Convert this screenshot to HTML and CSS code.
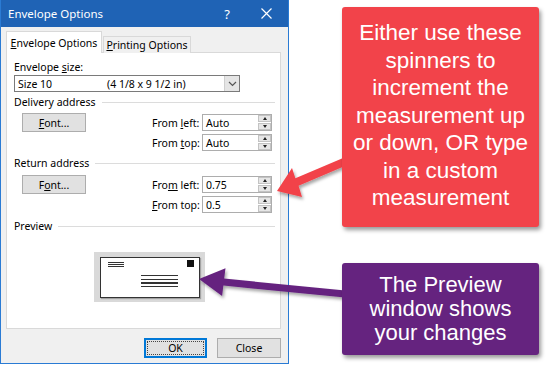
FILE: index.html
```html
<!DOCTYPE html>
<html>
<head>
<meta charset="utf-8">
<link rel="stylesheet" href="styles.css">
</head>
<body>
<div class="stage">
  <div class="dialog">
    <div class="titlebar">
      <span class="title">Envelope Options</span>
      <span class="help">?</span>
      <svg class="close" width="11" height="11" viewBox="0 0 11 11"><path d="M0.5 0.5L10.5 10.5M10.5 0.5L0.5 10.5" stroke="#fff" stroke-width="1.2"/></svg>
    </div>
    <div class="dlg-body">
      <div class="tabs">
        <div class="tab active"><u>E</u>nvelope Options</div>
        <div class="tab"><u>P</u>rinting Options</div>
      </div>
      <div class="panel">
        <div class="label">Envelope <u>s</u>ize:</div>
        <div class="select">
          <span class="sel-name">Size 10</span>
          <span class="sel-dim">(4 1/8 x 9 1/2 in)</span>
          <span class="sel-btn"><svg width="9" height="6" viewBox="0 0 9 6"><path d="M1 1L4.5 4.5L8 1" fill="none" stroke="#555" stroke-width="1.2"/></svg></span>
        </div>
        <div class="group g-delivery"><span>Delivery address</span><span class="rule"></span></div>
        <div class="addr a-delivery">
          <div class="btn font-btn"><u>F</u>ont...</div>
          <div class="fields">
            <div class="field"><span class="flabel">From <u>l</u>eft:</span><div class="spin"><span class="val">Auto</span><div class="spinbtns"><span class="up"></span><span class="down"></span></div></div></div>
            <div class="field"><span class="flabel">From <u>t</u>op:</span><div class="spin"><span class="val">Auto</span><div class="spinbtns"><span class="up"></span><span class="down"></span></div></div></div>
          </div>
        </div>
        <div class="group g-return"><span>Return address</span><span class="rule"></span></div>
        <div class="addr a-return">
          <div class="btn font-btn">F<u>o</u>nt...</div>
          <div class="fields">
            <div class="field"><span class="flabel">Fro<u>m</u> left:</span><div class="spin"><span class="val">0.75</span><div class="spinbtns"><span class="up"></span><span class="down"></span></div></div></div>
            <div class="field"><span class="flabel"><u>F</u>rom top:</span><div class="spin"><span class="val">0.5</span><div class="spinbtns"><span class="up"></span><span class="down"></span></div></div></div>
          </div>
        </div>
        <div class="group g-preview"><span>Preview</span><span class="rule"></span></div>
        <div class="preview">
          <div class="env">
            <div class="env-top">
              <div class="ret-lines"><i></i><i></i><i></i></div>
              <div class="stamp"></div>
            </div>
            <div class="del-lines"><i></i><i></i><i></i><i></i></div>
          </div>
        </div>
      </div>
      <div class="footer">
        <div class="btn ok"><span class="focus">OK</span></div>
        <div class="btn close-btn">Close</div>
      </div>
    </div>
  </div>

  <svg class="arrows" width="550" height="365" viewBox="0 0 550 365">
    <defs>
      <filter id="sh" x="-20%" y="-20%" width="140%" height="140%">
        <feDropShadow dx="1.5" dy="2.5" stdDeviation="1.8" flood-color="#000" flood-opacity="0.35"/>
      </filter>
    </defs>
    <polygon filter="url(#sh)" fill="#f2434a" points="277,191 302,197 298.6,185.7 352,163 349,155.6 295.4,178.3 292,168"/>
    <polygon filter="url(#sh)" fill="#65237f" points="199,279 222.1,296 223.4,285.6 350,298 350.4,291 224.2,278.6 225.5,268.2"/>
  </svg>

  <div class="callout red">Either use these spinners to increment the measurement up or down, OR type in a custom measurement</div>
  <div class="callout purple">The Preview window shows your changes</div>
</div>
</body>
</html>
```

FILE: styles.css
```css
* { box-sizing: border-box; }
html, body { margin: 0; padding: 0; background: #ffffff; }
body { width: 550px; height: 365px; overflow: hidden; }

.stage {
  position: relative;
  width: 550px;
  height: 365px;
  font-family: "Noto Sans", "Open Sans", sans-serif;
  font-size: 10.5px;
  color: #000;
  white-space: nowrap;
}

u { text-decoration: underline; text-underline-offset: 1px; }

.dialog {
  width: 289px;
  height: 364px;
  border: 1px solid #2a7bd4;
  border-top: none;
  background: #f0f0f0;
  display: flex;
  flex-direction: column;
}

.titlebar {
  height: 27px;
  background: #1f63b5;
  color: #fff;
  display: flex;
  align-items: center;
  padding-left: 7px;
  font-size: 11.5px;
}
.title { flex: 1; }
.help { font-size: 13px; margin-right: 31px; }
.close { margin-right: 16px; }

.dlg-body {
  flex: 1;
  display: flex;
  flex-direction: column;
  padding: 4px 7px 0 5px;
}

.tabs {
  display: flex;
  align-items: flex-end;
  height: 22px;
  position: relative;
  z-index: 1;
  margin-bottom: -1px;
}
.tab {
  border: 1px solid #d9d9d9;
  border-bottom: none;
  background: #f0f0f0;
  height: 17px;
  width: 88px;
  display: flex;
  align-items: center;
  justify-content: center;
  margin-left: 1px;
  flex-shrink: 0;
}
.tab.active {
  background: #fff;
  height: 22px;
  margin-left: 0;
  width: 96px;
}

.panel {
  background: #fff;
  border: 1px solid #d9d9d9;
  height: 277px;
  width: 275px;
  padding: 7px 0 0 7px;
  display: flex;
  flex-direction: column;
}

.label { height: 14px; line-height: 14px; }

.select {
  margin-top: 1px;
  width: 226px;
  height: 17px;
  border: 1px solid #7a7a7a;
  display: flex;
  align-items: center;
  background: #fff;
}
.sel-name { padding-left: 3px; width: 92px; flex-shrink: 0; }
.sel-dim { flex: 1; }
.sel-btn {
  width: 15px;
  height: 15px;
  background: #e5e5e5;
  border-left: 1px solid #cfcfcf;
  display: flex;
  align-items: center;
  justify-content: center;
  flex-shrink: 0;
}

.group {
  height: 14px;
  line-height: 14px;
  display: flex;
  align-items: center;
  width: 261px;
}
.group .rule { flex: 1; height: 1px; background: #dcdcdc; margin-left: 6px; }
.g-delivery { margin-top: 3px; }
.g-return { margin-top: 5px; }
.g-preview { margin-top: 6px; }

.addr { display: flex; align-items: flex-start; }
.a-delivery { margin-top: 4px; }
.a-return { margin-top: 5px; }

.btn {
  background: #e1e1e1;
  border: 1px solid #adadad;
  display: flex;
  align-items: center;
  justify-content: center;
  flex-shrink: 0;
}
.font-btn {
  margin-left: 8px;
  width: 64px;
  height: 19px;
}

.fields {
  margin-left: 66px;
  margin-top: 1px;
  display: flex;
  flex-direction: column;
  gap: 3px;
  flex-shrink: 0;
}
.field { display: flex; align-items: center; height: 17px; }
.flabel { width: 50px; flex-shrink: 0; }
.spin {
  width: 70px;
  height: 17px;
  border: 1px solid #adadad;
  display: flex;
  align-items: center;
  background: #fff;
  flex-shrink: 0;
}
.val { flex: 1; padding-left: 3px; }
.spinbtns {
  width: 13px;
  height: 15px;
  display: flex;
  flex-direction: column;
  gap: 1px;
}
.spinbtns span {
  flex: 1;
  background: #e6e6e6;
  border: 1px solid #c3c3c3;
  display: flex;
  align-items: center;
  justify-content: center;
}
.spinbtns .up::after {
  content: "";
  border-left: 2.5px solid transparent;
  border-right: 2.5px solid transparent;
  border-bottom: 3px solid #222;
}
.spinbtns .down::after {
  content: "";
  border-left: 2.5px solid transparent;
  border-right: 2.5px solid transparent;
  border-top: 3px solid #222;
}

.preview {
  margin-top: 19px;
  margin-left: 80px;
  width: 111px;
  height: 50px;
  background: #d9d9d9;
  padding: 5px 0 0 6px;
}
.env {
  width: 100px;
  height: 41px;
  background: #fff;
  border: 1.5px solid #333;
  box-shadow: 1px 1px 1px rgba(0,0,0,0.25);
  padding: 2px 5px 0 7px;
}
.env-top { display: flex; justify-content: space-between; }
.ret-lines { display: flex; flex-direction: column; gap: 1px; margin-top: 2px; }
.ret-lines i { display: block; width: 16px; height: 1px; background: #333; }
.stamp { width: 7px; height: 7px; background: #111; }
.del-lines {
  margin-left: 33px;
  margin-top: 8px;
  display: flex;
  flex-direction: column;
  gap: 2.5px;
}
.del-lines i { display: block; width: 37px; height: 1.2px; background: #333; }

.footer {
  margin-top: 9px;
  display: flex;
  justify-content: flex-end;
  gap: 10px;
}
.footer .btn { height: 20px; }
.ok {
  width: 63px;
  border: 1px solid #0078d7;
  box-shadow: inset 0 0 0 1px #0078d7;
  padding: 2px;
}
.ok .focus {
  width: 100%;
  height: 100%;
  border: 1px dotted #444;
  display: flex;
  align-items: center;
  justify-content: center;
}
.close-btn { width: 64px; }

.arrows {
  position: absolute;
  left: 0;
  top: 0;
  pointer-events: none;
}

.callout {
  position: absolute;
  left: 342px;
  width: 197px;
  color: #fff;
  font-family: "Liberation Sans", Arial, sans-serif;
  text-align: center;
  white-space: normal;
  border-radius: 3px;
  box-shadow: 2px 3px 4px rgba(0,0,0,0.4);
  display: flex;
  align-items: center;
  justify-content: center;
}
.callout.red {
  top: 7px;
  height: 220px;
  background: #f2434a;
  font-size: 22.5px;
  line-height: 27.5px;
  padding: 0 4px 3px;
}
.callout.purple {
  top: 263px;
  height: 92px;
  background: #65237f;
  font-size: 22px;
  line-height: 24px;
  padding: 0 10px;
}
```
